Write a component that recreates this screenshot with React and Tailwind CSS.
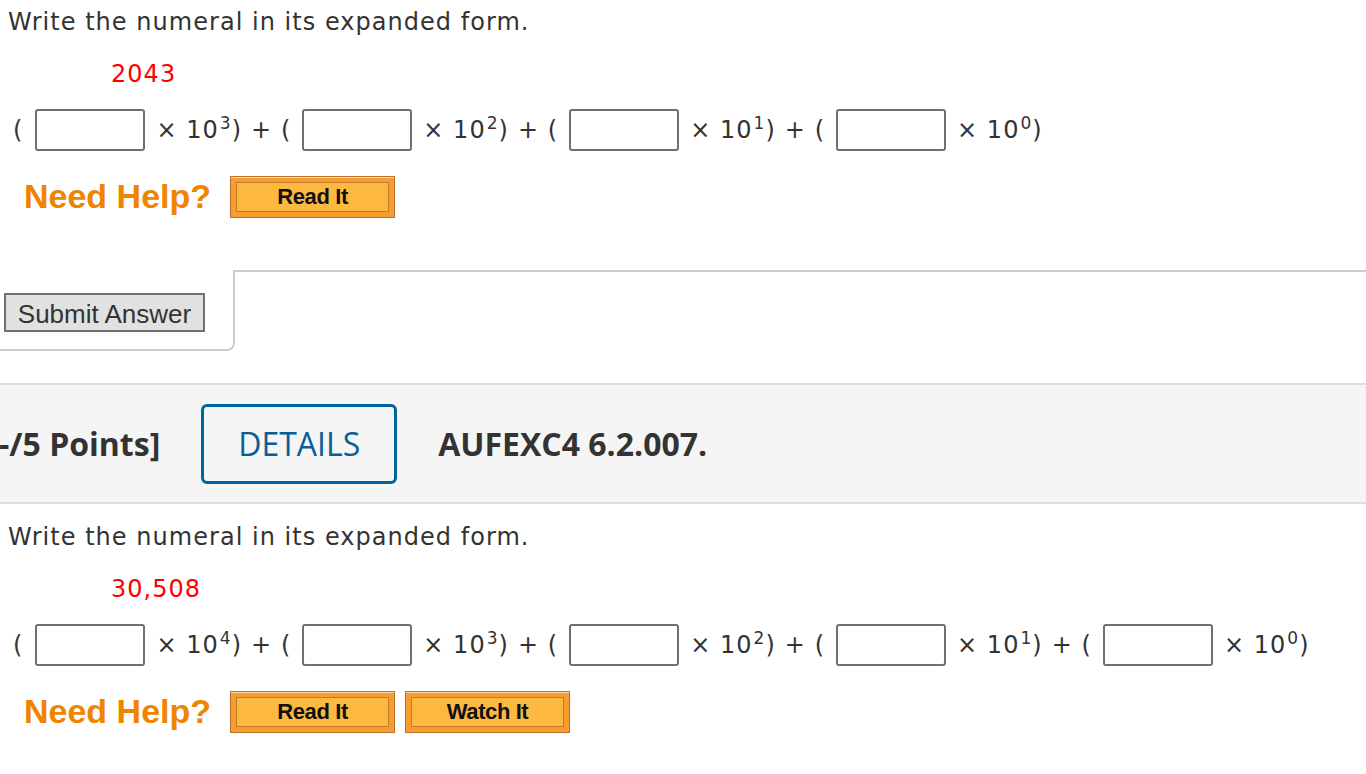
import React from 'react'

const qFont = { fontFamily: '"DejaVu Sans", Verdana, sans-serif' }
const arial = { fontFamily: '"Liberation Sans", Arial, sans-serif' }

function Box() {
  return <span className="inline-block align-middle w-[110px] h-[42px] border-2 border-[#707070] rounded-[3px] bg-white" />
}

function Term({ exp, last }) {
  return (
    <>
      <Box />
      <span className="ml-[11px]">× 10<sup className="text-[17px] relative -top-[9px] ml-[1px]">{exp}</sup>)</span>
      {!last && <span className="ml-[9px] mr-[11px]">+ (</span>}
    </>
  )
}

function HelpBtn({ label }) {
  return (
    <div className="w-[165px] h-[42px] border border-[#b5732d] bg-[#f99c2f] p-[5px] shadow-[inset_0_1px_0_#fcd9a4]">
      <div className="h-full border border-[#c17c2a] bg-[#fdb840] flex items-center justify-center text-[22px] font-bold text-[#111] tracking-[-0.4px]" style={arial}>
        {label}
      </div>
    </div>
  )
}

function Question({ num, exps, watch }) {
  return (
    <div className="text-[24px] text-[#333] tracking-[1.03px]" style={qFont}>
      <div className="pl-[8px] leading-[30px]">Write the numeral in its expanded form.</div>
      <div className="pl-[111px] mt-[22px] leading-[30px] text-[#ff0000]">{num}</div>
      <div className="pl-[13px] mt-[20px] h-[42px] flex items-center whitespace-nowrap">
        <span className="mr-[12px]">(</span>
        {exps.map((e, i) => (
          <Term key={e} exp={e} last={i === exps.length - 1} />
        ))}
      </div>
      <div className="pl-[24px] mt-[20px] flex items-center gap-[10px] tracking-normal">
        <span className="text-[34px] font-bold text-[#ee8400] mr-[9px]" style={arial}>Need Help?</span>
        <HelpBtn label="Read It" />
        {watch && <HelpBtn label="Watch It" />}
      </div>
    </div>
  )
}

export default function App() {
  return (
    <div className="w-[1366px] h-[774px] overflow-hidden bg-white">
      <div className="pt-[7px]">
        <Question num="2043" exps={['3', '2', '1', '0']} />
      </div>

      <div className="mt-[48px] flex">
        <div className="w-[235px] h-[81px] border-r-2 border-b-2 border-[#cccccc] rounded-br-[8px] pl-[4px] pt-[23px]">
          <button className="w-[201px] h-[39px] bg-[#e1e1e1] border-2 border-[#707070] text-[26px] text-[#333]" style={arial}>
            Submit Answer
          </button>
        </div>
        <div className="flex-1 border-t-2 border-[#cccccc]" />
      </div>

      <div className="mt-[32px] h-[121px] bg-[#f5f5f5] border-y-2 border-[#dddddd] flex items-center text-[32px] font-bold text-[#333]" style={{ fontFamily: '"Open Sans", sans-serif' }}>
        <span className="-ml-[1px]">-/5 Points]</span>
        <div className="ml-[41px] w-[196px] h-[80px] border-[3px] border-[#00649c] rounded-[6px] flex items-center justify-center text-[#0a5e96] font-normal">
          DETAILS
        </div>
        <span className="ml-[41px]">AUFEXC4 6.2.007.</span>
      </div>

      <div className="pt-[18px]">
        <Question num="30,508" exps={['4', '3', '2', '1', '0']} watch />
      </div>
    </div>
  )
}
